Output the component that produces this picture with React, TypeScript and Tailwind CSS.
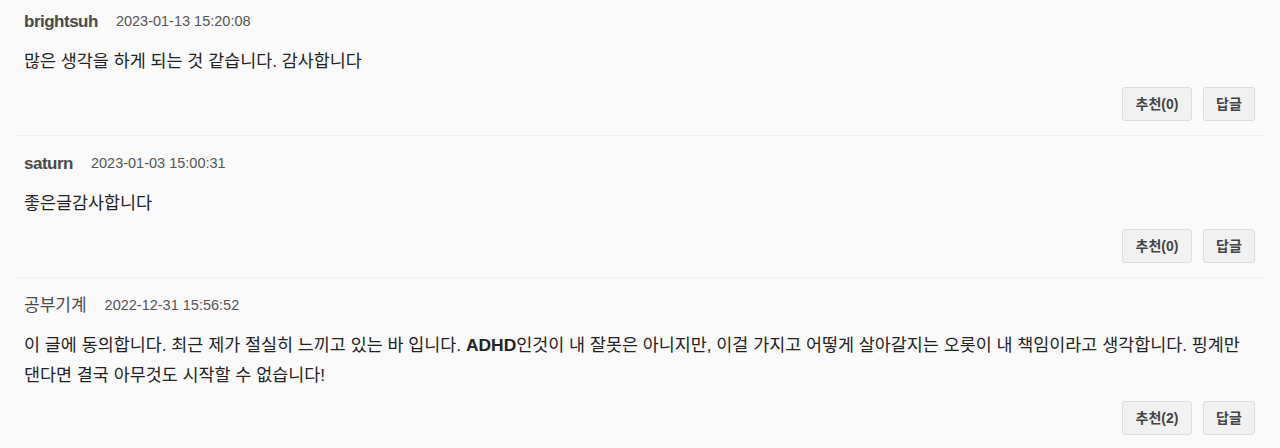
import React from "react";

type Comment = {
  id: number;
  author: string;
  latin: boolean;
  date: string;
  body: React.ReactNode;
  likes: number;
};

const comments: Comment[] = [
  {
    id: 1,
    author: "brightsuh",
    latin: true,
    date: "2023-01-13 15:20:08",
    body: "많은 생각을 하게 되는 것 같습니다. 감사합니다",
    likes: 0,
  },
  {
    id: 2,
    author: "saturn",
    latin: true,
    date: "2023-01-03 15:00:31",
    body: "좋은글감사합니다",
    likes: 0,
  },
  {
    id: 3,
    author: "공부기계",
    latin: false,
    date: "2022-12-31 15:56:52",
    body: (
      <>
        이 글에 동의합니다. 최근 제가 절실히 느끼고 있는 바 입니다. <b className="font-semibold">ADHD</b>인것이 내 잘못은 아니지만, 이걸 가지고 어떻게 살아갈지는 오롯이 내 책임이라고 생각합니다. 핑계만 댄다면 결국 아무것도 시작할 수 없습니다!
      </>
    ),
    likes: 2,
  },
];

const font = "font-['Liberation_Sans','Noto_Sans_CJK_KR',sans-serif]";

function CommentItem({ c }: { c: Comment }) {
  const cssButton =
    "h-[34px] rounded-[3px] border border-[#dcdcdc] bg-[#f1f1f1] text-[14px] font-bold text-[#444] flex items-center justify-center";

  return (
    <li className="border-b border-dotted border-[#e6e6e6] px-[7px] pt-[18px] pb-[14px]">
      <div className="flex items-center h-5">
        <span
          className={`text-[17px] text-[#4a4a4a] ${c.latin ? "font-bold tracking-[-0.5px]" : "font-normal text-[17.5px]"}`}
        >
          {c.author}
        </span>
        <span className="ml-[18px] text-[14.5px] text-[#555]">{c.date}</span>
      </div>
      <p className="mt-[14px] text-[17.4px] leading-[30px] text-[#222] break-keep">{c.body}</p>
      <div className="mt-[11px] flex justify-end gap-[11px] pr-[1px]">
        <button className={`${cssButton} w-[70px]`}>추천({c.likes})</button>
        <button className={`${cssButton} w-[52px]`}>답글</button>
      </div>
    </li>
  );
}

export default function App() {
  return (
    <div className={`${font} min-h-[448px] bg-[#fafafa] overflow-hidden`}>
      <ul className="mx-[17px] -mt-[6px]">
        {comments.map((c) => (
          <CommentItem key={c.id} c={c} />
        ))}
      </ul>
    </div>
  );
}
